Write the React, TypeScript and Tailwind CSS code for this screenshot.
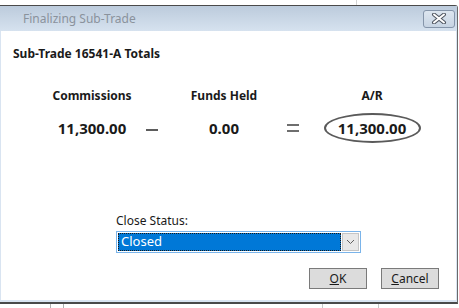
import React from "react";

const font = { fontFamily: '"Noto Sans", "Open Sans", sans-serif' };

function CloseX() {
  return (
    <svg width="16" height="11" viewBox="0 0 16 11">
      <path d="M3 1.5 L13 9.5 M13 1.5 L3 9.5" stroke="#4f5560" strokeWidth="4" strokeLinecap="round" />
      <path d="M3 1.5 L13 9.5 M13 1.5 L3 9.5" stroke="#ffffff" strokeWidth="2" strokeLinecap="round" />
    </svg>
  );
}

export default function App() {
  return (
    <div className="relative h-[308px] w-[459px] overflow-hidden bg-white text-[#1a1a1a]" style={font}>
      {/* background desktop lines */}
      <div className="absolute left-[356px] top-0 h-[5px] w-px bg-[#d4d4d4]" />
      <div className="absolute left-[50px] top-[304px] h-[4px] w-px bg-[#b0b0b0]" />
      <div className="absolute left-[63px] top-[304px] h-[4px] w-px bg-[#b0b0b0]" />
      <div className="absolute left-[322px] top-[304px] h-[4px] w-px bg-[#c8c8c8]" />
      <div className="absolute left-[378px] top-[304px] h-[4px] w-px bg-[#c8c8c8]" />

      <div className="mt-[5px] flex h-[299px] w-[458px] flex-col rounded-tr-[3px] border-t border-r border-b-2 border-[#4a4a4a] border-r-[#6a6a6a]">
        {/* title bar */}
        <div className="flex h-[25px] shrink-0 items-center justify-between bg-gradient-to-b from-[#bccbdc] to-[#d6e2ef] pl-[23px] pr-[2px]">
          <span className="text-[12px] text-[#8a929c]">Finalizing Sub-Trade</span>
          <div className="flex h-[18px] w-[32px] items-center justify-center rounded-[3px] border border-[#8595aa] bg-gradient-to-b from-[#dde6f0] to-[#c7d4e3]">
            <CloseX />
          </div>
        </div>

        {/* body */}
        <div className="flex flex-1 flex-col border-x border-b-2 border-[#d9e4f1] bg-white">
          <div className="ml-[12px] mt-[15px] text-[12px] font-bold leading-[16px]">Sub-Trade 16541-A Totals</div>

          <div className="ml-[41px] mt-[26px] grid grid-cols-[100px_20px_124px_14px_144px] items-center text-center">
            <div className="text-[12px] font-bold leading-[16px]">Commissions</div>
            <div />
            <div className="text-[12px] font-bold leading-[16px]">Funds Held</div>
            <div />
            <div className="text-[12px] font-bold leading-[16px]">A/R</div>
          </div>

          <div className="ml-[41px] mt-[9px] grid h-[30px] grid-cols-[100px_20px_124px_14px_144px] items-center text-center">
            <div className="text-[15px] font-bold">11,300.00</div>
            <div className="flex justify-center">
              <div className="mt-[4px] h-[2px] w-[12px] bg-[#5c5c5c]" />
            </div>
            <div className="text-[15px] font-bold">0.00</div>
            <div className="flex flex-col items-center gap-[4px]">
              <div className="h-[2px] w-[12px] bg-[#6e6e6e]" />
              <div className="h-[2px] w-[12px] bg-[#6e6e6e]" />
            </div>
            <div className="flex justify-center">
              <div className="flex h-[30px] w-[97px] items-center justify-center rounded-[50%] border-2 border-[#5a5a5a] text-[15px] font-bold">
                11,300.00
              </div>
            </div>
          </div>

          <div className="ml-[115px] mt-[70px] text-[12px] leading-[16px]">Close Status:</div>
          <div className="ml-[115px] mt-[2px] flex h-[22px] w-[245px] border border-[#7ab4ea] bg-white p-px">
            <div className="flex flex-1 items-center border border-dotted border-[#1a1a1a] bg-[#0078d7] pl-[2px] text-[13px] text-white">
              Closed
            </div>
            <div className="ml-px flex w-[17px] items-center justify-center border border-[#c5c5c5] bg-[#e8e8e8]">
              <svg width="9" height="6" viewBox="0 0 9 6">
                <path d="M1 1 L4.5 4.5 L8 1" fill="none" stroke="#606060" strokeWidth="1" />
              </svg>
            </div>
          </div>

          <div className="ml-[308px] mt-[15px] flex gap-[14px]">
            <button className="flex h-[21px] w-[58px] items-center justify-center border border-[#7a7a7a] bg-[#dcdcdc] text-[12px]">
              <span><span className="underline">O</span>K</span>
            </button>
            <button className="flex h-[21px] w-[58px] items-center justify-center border border-[#7a7a7a] bg-[#dcdcdc] text-[12px]">
              <span><span className="underline">C</span>ancel</span>
            </button>
          </div>
        </div>
      </div>
    </div>
  );
}
